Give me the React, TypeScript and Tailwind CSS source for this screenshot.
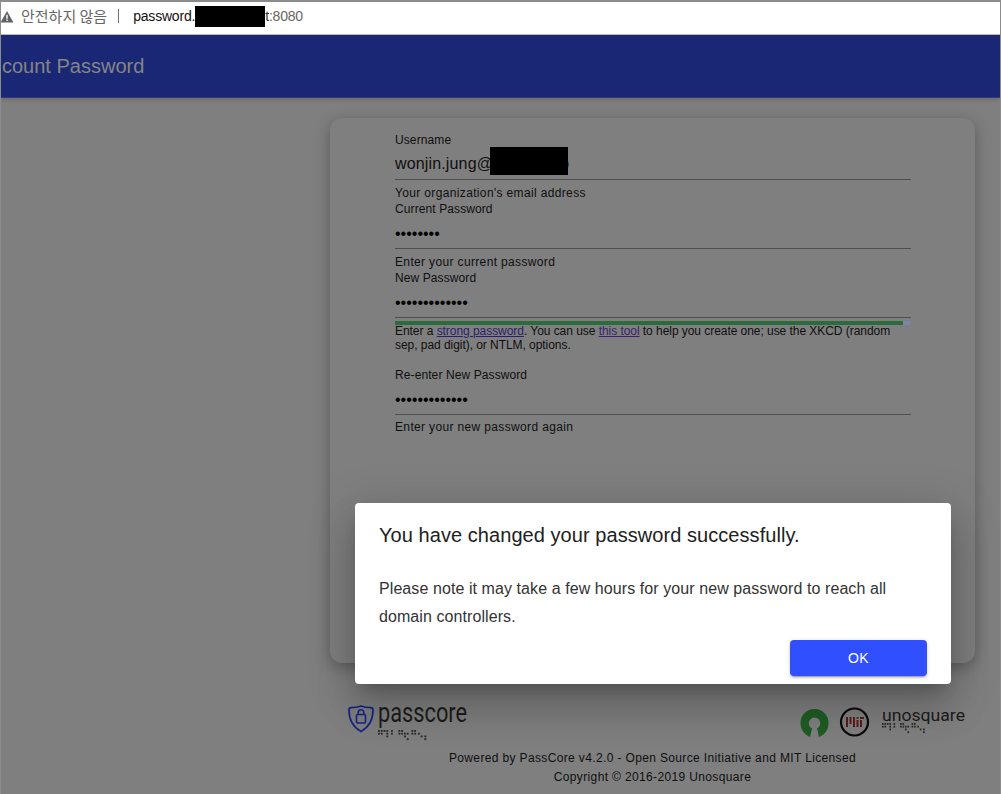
import React from "react";

const sans = { fontFamily: '"Liberation Sans", Arial, sans-serif' };

function Braille({ dots, width }: { dots: [number, number][]; width: number }) {
  return (
    <svg className="block" width={width} height="11" viewBox="0 0 56 12" preserveAspectRatio="none">
      {dots.map(([x, y], i) => (
        <rect key={i} x={x} y={y} width="2" height="2" fill="#2a2a2a" />
      ))}
    </svg>
  );
}

const brailleDots: [number, number][] = [
  [0, 0], [3, 0], [6, 0], [0, 3], [3, 3], [9, 0], [9, 3], [9, 6], [14, 3], [14, 0], [22, 0], [25, 0], [22, 3], [25, 3], [28, 3], [31, 3], [28, 6], [31, 9], [36, 0], [39, 0], [36, 3], [39, 3], [43, 3], [46, 6], [50, 6], [50, 9],
];

function Field({
  label,
  value,
  help,
  dots,
  mt,
  helpMt = "mt-[5px]",
}: {
  label: string;
  value?: string;
  help?: React.ReactNode;
  dots?: boolean;
  mt?: string;
  helpMt?: string;
}) {
  return (
    <div className={mt}>
      <div className="text-[12px] leading-[16px] tracking-[0.1px] text-[#0f0f0f]">{label}</div>
      <div
        className={
          dots
            ? "h-[32px] pt-[7px] text-[#000] text-[16px] leading-[20px] border-b border-[#4f4f4f]"
            : "h-[32px] pt-[6px] text-[16px] leading-[20px] tracking-[0.15px] text-[#0f0f0f] border-b border-[#4f4f4f] whitespace-nowrap"
        }
      >
        {value}
      </div>
      {help && <div className={`${helpMt} text-[12px] leading-[16px] tracking-[0.35px] text-[#0f0f0f]`}>{help}</div>}
    </div>
  );
}

export default function App() {
  return (
    <div className="relative w-[1001px] h-[794px] overflow-hidden bg-[#7f7f7f] border-x border-[#8c8c8c]" style={sans}>
      {/* address bar */}
      <div className="h-[35px] bg-white border-t-2 border-[#8c8c8c] border-b border-b-[#bdbdbd] flex items-center pb-[4px] text-[14px]">
        <svg width="13" height="13" viewBox="0 0 13 13" className="shrink-0">
          <path d="M6 1 L12.5 12.5 L-0.5 12.5 Z" fill="#5f6368" />
          <rect x="5.3" y="4.8" width="1.4" height="4" fill="#fff" />
          <rect x="5.3" y="9.6" width="1.4" height="1.4" fill="#fff" />
        </svg>
        <span className="ml-[7px] text-[#666] text-[15px]" style={{ fontFamily: '"Noto Sans CJK KR", sans-serif' }}>
          안전하지 않음
        </span>
        <span className="ml-[11px] w-px h-[14px] bg-[#777]" />
        <span className="ml-[14px] text-[#111] text-[14px] tracking-[-0.2px] flex items-center">
          password.
          <span className="inline-block w-[70px] h-[21px] bg-black" />
          <span className="text-[#333]">t</span>
          <span className="text-[#666]">:8080</span>
        </span>
      </div>

      {/* app bar */}
      <div className="h-[63px] bg-[#1a2775] flex items-center pl-[1px] text-[20px] text-[#858585] shadow-[0_2px_4px_rgba(0,0,0,0.15)] border-b border-[#303a75]">
        count Password
      </div>

      {/* card */}
      <div className="ml-[329px] mt-[20px] w-[645px] h-[545px] rounded-[12px] bg-[#7f7f7f] shadow-[0_4px_16px_rgba(0,0,0,0.3)] pl-[65px] pr-[64px] pt-[14px]">
        <Field label="Username" value="wonjin.jung@xxxxxxx.ro" help="Your organization's email address" />
        <Field label="Current Password" value="••••••••" dots help="Enter your current password" />
        <Field label="New Password" value="•••••••••••••" dots help={null} />
        <div className="mt-[3px] h-[4px] bg-[#7d84a8]">
          <div className="h-full w-[98.4%] bg-[#2e6b3c]" />
        </div>
        <div className="text-[12px] leading-[14px] tracking-[-0.05px] text-[#0f0f0f] -mt-[1px]">
          Enter a <span className="underline text-[#2a1f6e]">strong password</span>. You can use{" "}
          <span className="underline text-[#3c1f6e]">this tool</span> to help you create one; use the XKCD (random
          <br />
          sep, pad digit), or NTLM, options.
        </div>
        <Field label="Re-enter New Password" value="•••••••••••••" dots mt="mt-[15px]" helpMt="mt-[4px]" help="Enter your new password again" />
      </div>

      {/* footer */}
      <div className="ml-[347px] mt-[37px] w-[618px] flex justify-between items-start">
        <div className="flex">
          <svg width="26" height="28" viewBox="0 0 26 28" className="mt-[5px]">
            <path d="M13 1 C 10 2.2 6 2.6 3 2.6 C 1.4 2.6 1 3.4 1 5 C 1 14 5 22 13 26.5 C 21 22 25 14 25 5 C 25 3.4 24.6 2.6 23 2.6 C 20 2.6 16 2.2 13 1 Z" fill="none" stroke="#16258a" strokeWidth="1.7" />
            <rect x="8.5" y="9.5" width="9" height="8.5" rx="1" fill="none" stroke="#16258a" strokeWidth="1.6" />
            <path d="M10.2 9.5 V7.5 A2.8 2.8 0 0 1 15.8 7.5 V9.5" fill="none" stroke="#16258a" strokeWidth="1.6" />
          </svg>
          <div className="ml-[4px] w-[92px]">
            <svg className="block" width="116" height="30" viewBox="0 0 116 30">
              <text x="0" y="22" fontSize="28" fill="#1c1c1c" textLength="89" lengthAdjust="spacingAndGlyphs" fontFamily="Roboto, sans-serif">
                passcore
              </text>
            </svg>
            <Braille dots={brailleDots} width={52} />
          </div>
        </div>
        <div className="flex items-start">
          <svg width="30" height="30" viewBox="0 0 30 30" className="mt-[8px] mr-[9px]">
            <path d="M10 29 C 3 26 0.5 20 0.5 15 A 14 14 0 0 1 28.5 15 C 28.5 21 26 26 19 29 L 17 20.5 A 5.8 5.8 0 1 0 12 20.5 Z" fill="#1f5c24" />
          </svg>
          <svg width="32" height="32" viewBox="0 0 32 32" className="mt-[6px] mr-[11px]">
            <circle cx="15.5" cy="16" r="13.5" fill="none" stroke="#0a0a0a" strokeWidth="2.2" />
            <rect x="7" y="11" width="2" height="10" fill="#5e1a1a" />
            <rect x="10.5" y="11" width="2" height="7" fill="#5e1a1a" />
            <rect x="14" y="11" width="2" height="10" fill="#5e1a1a" />
            <rect x="17.5" y="14" width="2" height="7" fill="#5e1a1a" />
            <rect x="17.5" y="11" width="2" height="2" fill="#3a3a3a" />
            <rect x="21" y="14" width="2" height="7" fill="#5e1a1a" />
            <rect x="21" y="11" width="4" height="2" fill="#5e1a1a" />
          </svg>
          <div className="w-[84px]">
            <svg className="block" width="84" height="26" viewBox="0 0 84 26">
              <text x="0" y="21" fontSize="16" fill="#1c1c1c" textLength="83" lengthAdjust="spacingAndGlyphs" fontFamily="Roboto, sans-serif">
                unosquare
              </text>
            </svg>
            <div className="-mt-[3px]">
              <Braille dots={brailleDots} width={46} />
            </div>
          </div>
        </div>
      </div>
      <div className="ml-[329px] w-[645px] text-center text-[12px] leading-[19px] tracking-[0.36px] text-[#0f0f0f] mt-[8px]">
        <div>Powered by PassCore v4.2.0 - Open Source Initiative and MIT Licensed</div>
        <div>Copyright © 2016-2019 Unosquare</div>
      </div>

      {/* redaction over the username */}
      <div className="absolute left-[489px] top-[147px] w-[78px] h-[28px] bg-black" />

      {/* dialog */}
      <div className="absolute left-[354px] top-[503px] w-[596px] h-[181px] bg-white rounded-[4px] shadow-[0_11px_15px_-7px_rgba(0,0,0,0.2),0_24px_38px_3px_rgba(0,0,0,0.14),0_9px_46px_8px_rgba(0,0,0,0.12)] px-[24px] pt-[16px]">
        <h2 className="text-[20px] leading-[32px] tracking-[0.06px] text-[#212121]">You have changed your password successfully.</h2>
        <p className="mt-[24px] text-[16px] leading-[28px] tracking-[0.08px] text-[#333]">
          Please note it may take a few hours for your new password to reach all
          <br />
          domain controllers.
        </p>
        <div className="flex justify-end mt-[9px]">
          <button className="w-[137px] h-[36px] rounded-[4px] bg-[#304ffe] text-white text-[14px] tracking-[0.4px] shadow-[0_3px_1px_-2px_rgba(0,0,0,0.2),0_2px_2px_0_rgba(0,0,0,0.14),0_1px_5px_0_rgba(0,0,0,0.12)]">
            OK
          </button>
        </div>
      </div>
    </div>
  );
}
